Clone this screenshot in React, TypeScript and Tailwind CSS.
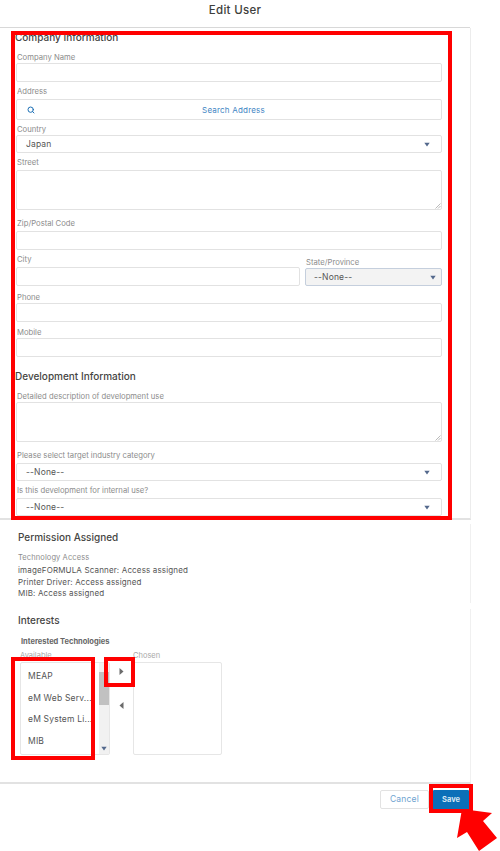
import React from "react";
import { Search } from "lucide-react";

const labelCls = "block h-[12px] pt-[1px] leading-[12px] text-[7.7px] text-[#8c8c8c] pl-[1px] whitespace-nowrap";
const boxCls = "block w-full border border-[#e2e2e2] rounded-[2px] bg-white";

function Caret({ className = "" }: { className?: string }) {
  return (
    <svg width="6" height="5" viewBox="0 0 6 5" className={className}>
      <path d="M0.3 0.8h5.4L3 4.4z" fill="#54698d" />
    </svg>
  );
}

function SelectBox({ value, className = "" }: { value: string; className?: string }) {
  return (
    <div className={`${boxCls} flex items-center justify-between pl-[9px] pr-[11px] text-[8.5px] text-[#555555] tracking-[0.15px] ${className}`}>
      <span>{value}</span>
      <Caret />
    </div>
  );
}

function TextArea({ className = "" }: { className?: string }) {
  return (
    <div className={`relative ${className}`}>
      <textarea className={`${boxCls} h-[40px] resize-none`} />
      <svg className="absolute right-[1px] bottom-[1px]" width="6" height="6" viewBox="0 0 6 6">
        <path d="M0.5 5.5L5.5 0.5M3 5.5L5.5 3" stroke="#a8a8a8" strokeWidth="0.8" fill="none" />
      </svg>
    </div>
  );
}

function Heading({ children, className = "" }: { children: React.ReactNode; className?: string }) {
  return <h2 className={`text-[10px] leading-[12px] font-medium text-[#454543] whitespace-nowrap ${className}`}>{children}</h2>;
}

export default function App() {
  return (
    <div className="relative w-[500px] h-[851px] bg-white overflow-hidden font-['Inter',sans-serif]">
      <header className="h-[28px] w-[470px] border-b border-[#d8d8d8] flex items-start justify-center pt-[3px]">
        <h1 className="text-[11.5px] leading-[14px] text-[#3e3e3c] tracking-[0.3px] font-medium">Edit User</h1>
      </header>

      <section className="w-[471px] h-[492px] border-r border-b-2 border-[#ececec] border-b-[#e2e2e2] pl-[15px] pt-[3px] overflow-hidden">
        <div className="w-[427px]">
          <Heading>Company Information</Heading>
          <div className="mt-[8px] pl-[1px]">
            <label className={labelCls}>Company Name</label>
            <input className={`${boxCls} h-[19px]`} />
            <label className={`${labelCls} mt-[3px]`}>Address</label>
            <div className={`${boxCls} mt-[2px] h-[21px] relative flex items-center justify-center pl-[9px] text-[8px] text-[#3f86c4] tracking-[0.2px]`}>
              <Search size={8} strokeWidth={3} className="absolute left-[10px] text-[#1b6fb5]" />
              <span>Search Address</span>
            </div>
            <label className={`${labelCls} mt-[3px]`}>Country</label>
            <SelectBox value="Japan" className="h-[18px]" />
            <label className={`${labelCls} mt-[3px]`}>Street</label>
            <TextArea className="mt-[2px]" />
            <label className={`${labelCls} mt-[7px]`}>Zip/Postal Code</label>
            <input className={`${boxCls} mt-[2px] h-[19px]`} />
            <div className="flex items-start gap-[5px]">
              <div className="w-[284px] mt-[3px]">
                <label className={labelCls}>City</label>
                <input className={`${boxCls} h-[19px] mt-[2px]`} />
              </div>
              <div className="flex-1 mt-[6px]">
                <label className={labelCls}>State/Province</label>
                <div className="h-[18px] w-full border border-[#c5cfdd] rounded-[2px] bg-[#f3f3f3] flex items-center justify-between pl-[8px] pr-[5px] text-[8.5px] text-[#555555] tracking-[0.15px]">
                  <span>--None--</span>
                  <Caret />
                </div>
              </div>
            </div>
            <label className={`${labelCls} mt-[5px]`}>Phone</label>
            <input className={`${boxCls} h-[19px]`} />
            <label className={`${labelCls} mt-[4px]`}>Mobile</label>
            <input className={`${boxCls} h-[19px]`} />
          </div>
          <Heading className="mt-[13px]">Development Information</Heading>
          <div className="pl-[1px] mt-[8px]">
            <label className={labelCls}>Detailed description of development use</label>
            <TextArea />
            <label className={`${labelCls} mt-[7px]`}>Please select target industry category</label>
            <SelectBox value="--None--" className="mt-[2px] h-[18px]" />
            <label className={`${labelCls} mt-[3px]`}>Is this development for internal use?</label>
            <SelectBox value="--None--" className="mt-[2px] h-[18px]" />
          </div>
        </div>
      </section>

      <section className="mt-[4px] w-[471px] h-[79px] border-r border-[#f0f0f0] pl-[18px] pt-[7px]">
        <Heading>Permission Assigned</Heading>
        <p className="mt-[10px] text-[7.5px] leading-[10px] text-[#8c8c8c] tracking-[0.1px]">Technology Access</p>
        <ul className="mt-[2px] text-[8px] leading-[11.5px] text-[#555555] tracking-[0.15px]">
          <li>imageFORMULA Scanner: Access assigned</li>
          <li>Printer Driver: Access assigned</li>
          <li>MIB: Access assigned</li>
        </ul>
      </section>

      <section className="mt-[6px] w-[471px] h-[175px] border-r border-b-2 border-[#f0f0f0] border-b-[#e2e2e2] pl-[18px] pt-[5px]">
        <Heading>Interests</Heading>
        <h3 className="mt-[11px] ml-[3px] text-[7.5px] leading-[10px] font-bold text-[#666666]">Interested Technologies</h3>
        <div className="flex mt-[3px] ml-[2px]">
          <div className="w-[90px]">
            <p className="mt-[1px] text-[7.5px] leading-[10px] text-[#a8a8a8]">Available</p>
            <div className="mt-[1px] h-[93px] border border-[#e6e6e6] rounded-[2px] flex overflow-hidden">
              <ul className="flex-1 pl-[7px] pt-[3px] text-[8.5px] leading-[21.7px] text-[#555555] tracking-[0.2px] whitespace-nowrap">
                <li>MEAP</li>
                <li>eM Web Serv...</li>
                <li>eM System Li...</li>
                <li>MIB</li>
              </ul>
              <div className="w-[10px] bg-[#f1f1f1] flex flex-col items-center">
                <div className="h-[9px]" />
                <div className="w-full h-[33px] bg-[#c1c1c1]" />
                <div className="flex-1" />
                <Caret className="mb-[3px]" />
              </div>
            </div>
          </div>
          <div className="w-[23px] flex flex-col items-center pt-[18px] gap-[27px]">
            <svg width="5" height="7" viewBox="0 0 5 7"><path d="M0.5 0L4.5 3.5L0.5 7z" fill="#6b6b6b" /></svg>
            <svg width="5" height="7" viewBox="0 0 5 7"><path d="M4.5 0L0.5 3.5L4.5 7z" fill="#6b6b6b" /></svg>
          </div>
          <div className="w-[89px]">
            <p className="mt-[1px] text-[7.5px] leading-[10px] text-[#a8a8a8]">Chosen</p>
            <div className="mt-[1px] h-[93px] border border-[#e6e6e6] rounded-[2px]" />
          </div>
        </div>
      </section>

      <footer className="flex justify-end w-[470px] pt-[6px] pr-[1px]">
        <button className="w-[49px] h-[19px] border border-[#e2e2e2] rounded-[2px] bg-white text-[8.5px] text-[#6fa3d0] tracking-[0.2px]">Cancel</button>
        <button className="ml-[4px] w-[36px] h-[20px] rounded-[1px] bg-[#0b6fb8] text-[7.5px] font-bold text-[#d6e6f3]">Save</button>
      </footer>

      <div className="absolute left-[11px] top-[31px] w-[441px] h-[489px] border-4 border-[#ff0000]" />
      <div className="absolute left-[11px] top-[657px] w-[84px] h-[103px] border-4 border-[#ff0000]" />
      <div className="absolute left-[104px] top-[657px] w-[31px] h-[30px] border-4 border-[#ff0000]" />
      <div className="absolute left-[429px] top-[784px] w-[44px] h-[29px] border-4 border-[#ff0000]" />
      <svg className="absolute left-0 top-0 pointer-events-none" width="500" height="851" viewBox="0 0 500 851">
        <path d="M462 809L492 813L483 821L497 838L479 851L467 832L457 838z" fill="#ff0000" />
      </svg>
    </div>
  );
}
